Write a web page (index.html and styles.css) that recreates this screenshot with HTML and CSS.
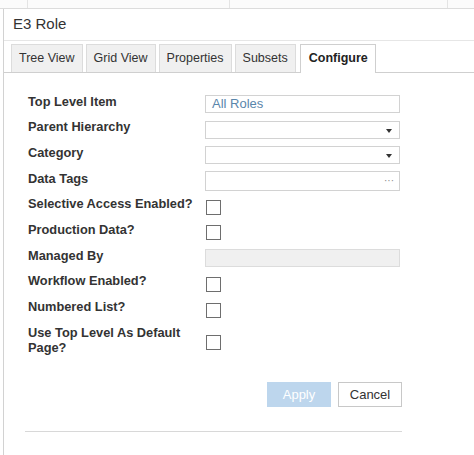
FILE: index.html
```html
<!DOCTYPE html>
<html>
<head>
<meta charset="utf-8">
<link rel="stylesheet" href="styles.css">
</head>
<body>
<div class="topstrip">
  <div class="cell c1"></div>
  <div class="cell c2"></div>
  <div class="cell c3"></div>
  <div class="cell c4"></div>
</div>
<div class="panel">
  <div class="title">E3 Role</div>
  <div class="tabs">
    <div class="tab">Tree View</div>
    <div class="tab">Grid View</div>
    <div class="tab">Properties</div>
    <div class="tab">Subsets</div>
    <div class="tab active">Configure</div>
  </div>
  <div class="form">
    <div class="label">Top Level Item</div>
    <div class="ctl"><div class="input text">All Roles</div></div>

    <div class="label">Parent Hierarchy</div>
    <div class="ctl"><div class="input select"><span class="caret"></span></div></div>

    <div class="label">Category</div>
    <div class="ctl"><div class="input select"><span class="caret"></span></div></div>

    <div class="label">Data Tags</div>
    <div class="ctl"><div class="input tags"><span class="dots">&middot;&middot;&middot;</span></div></div>

    <div class="label">Selective Access Enabled?</div>
    <div class="ctl"><div class="check"></div></div>

    <div class="label">Production Data?</div>
    <div class="ctl"><div class="check"></div></div>

    <div class="label">Managed By</div>
    <div class="ctl"><div class="input disabled"></div></div>

    <div class="label">Workflow Enabled?</div>
    <div class="ctl"><div class="check"></div></div>

    <div class="label">Numbered List?</div>
    <div class="ctl"><div class="check"></div></div>

    <div class="label last">Use Top Level As Default Page?</div>
    <div class="ctl last"><div class="check lastcheck"></div></div>
  </div>
  <div class="footer">
    <div class="buttons">
      <div class="btn apply">Apply</div>
      <div class="btn cancel">Cancel</div>
    </div>
    <div class="rule"></div>
  </div>
</div>
</body>
</html>
```

FILE: styles.css
```css
html, body {
  margin: 0;
  padding: 0;
  background: #ffffff;
  font-family: "Liberation Sans", Arial, sans-serif;
  color: #333333;
}
body {
  width: 474px;
  height: 455px;
  overflow: hidden;
}
.topstrip {
  display: flex;
  height: 8px;
  border-bottom: 1px solid #dcdcdc;
  background: #fbfbfb;
}
.cell {
  box-sizing: border-box;
  height: 8px;
  border-right: 1px solid #e4e4e4;
}
.c1 { width: 28px; }
.c2 { width: 202px; }
.c3 { width: 218px; }
.c4 { flex: 1; border-right: none; }

.panel {
  margin-left: 3px;
  border-left: 1px solid #d2d2d2;
  height: 446px;
}
.title {
  height: 31px;
  line-height: 30px;
  padding-left: 9px;
  font-size: 15px;
  color: #333333;
  border-bottom: 1px solid #e6e6e6;
}
.tabs {
  display: flex;
  gap: 3px;
  padding-top: 3px;
  padding-left: 7px;
  border-bottom: 1px solid #cfcfcf;
  height: 28px;
}
.tab {
  box-sizing: border-box;
  height: 28px;
  padding: 0 7px;
  line-height: 27px;
  font-size: 12.5px;
  color: #333333;
  background: #f0f0f0;
  border: 1px solid #dcdcdc;
  border-bottom: none;
}
.tab.active {
  background: #ffffff;
  font-weight: bold;
  color: #222222;
  border-color: #cfcfcf;
  height: 29px;
  padding: 0 7px 0 8px;
  margin-left: 1px;
}

.form {
  display: grid;
  grid-template-columns: 177px 196px;
  grid-auto-rows: 25.7px;
  padding-top: 20.5px;
  padding-left: 24px;
}
.label {
  font-size: 12.8px;
  font-weight: bold;
  line-height: 15px;
  color: #333333;
  padding-right: 6px;
}
.label.last, .ctl.last {
  height: 32px;
}
.ctl {
  position: relative;
}
.input {
  box-sizing: border-box;
  width: 195px;
  height: 18px;
  margin-top: 1.5px;
  border: 1px solid #d2d2d2;
  background: #ffffff;
  position: relative;
}
.input.text {
  font-size: 13px;
  line-height: 16px;
  padding-left: 6px;
  color: #5a86ab;
}
.input.tags {
  height: 20px;
  margin-top: 0;
}
.input.disabled {
  background: #f0f0f0;
  border-color: #dcdcdc;
}
.caret {
  position: absolute;
  right: 7px;
  top: 7px;
  width: 0;
  height: 0;
  border-left: 3px solid transparent;
  border-right: 3px solid transparent;
  border-top: 4px solid #333333;
}
.dots {
  position: absolute;
  right: 5px;
  top: 1px;
  font-size: 10px;
  line-height: 16px;
  color: #888888;
}
.check {
  box-sizing: border-box;
  width: 15px;
  height: 15px;
  margin-left: 1px;
  margin-top: 3.5px;
  border: 1px solid #6e6e6e;
  background: #ffffff;
}
.check.lastcheck {
  margin-top: 10.5px;
}

.footer {
  margin-left: 21px;
  width: 377px;
  padding-top: 32px;
}
.buttons {
  display: flex;
  justify-content: flex-end;
  gap: 7px;
}
.btn {
  box-sizing: border-box;
  width: 64px;
  height: 25px;
  line-height: 23px;
  text-align: center;
  font-size: 13px;
}
.btn.apply {
  background: #bdd6ed;
  color: #ffffff;
  border: 1px solid #bdd6ed;
}
.btn.cancel {
  background: #ffffff;
  color: #333333;
  border: 1px solid #c8c8c8;
}
.rule {
  margin-top: 24px;
  height: 1px;
  background: #d8d8d8;
}
```
